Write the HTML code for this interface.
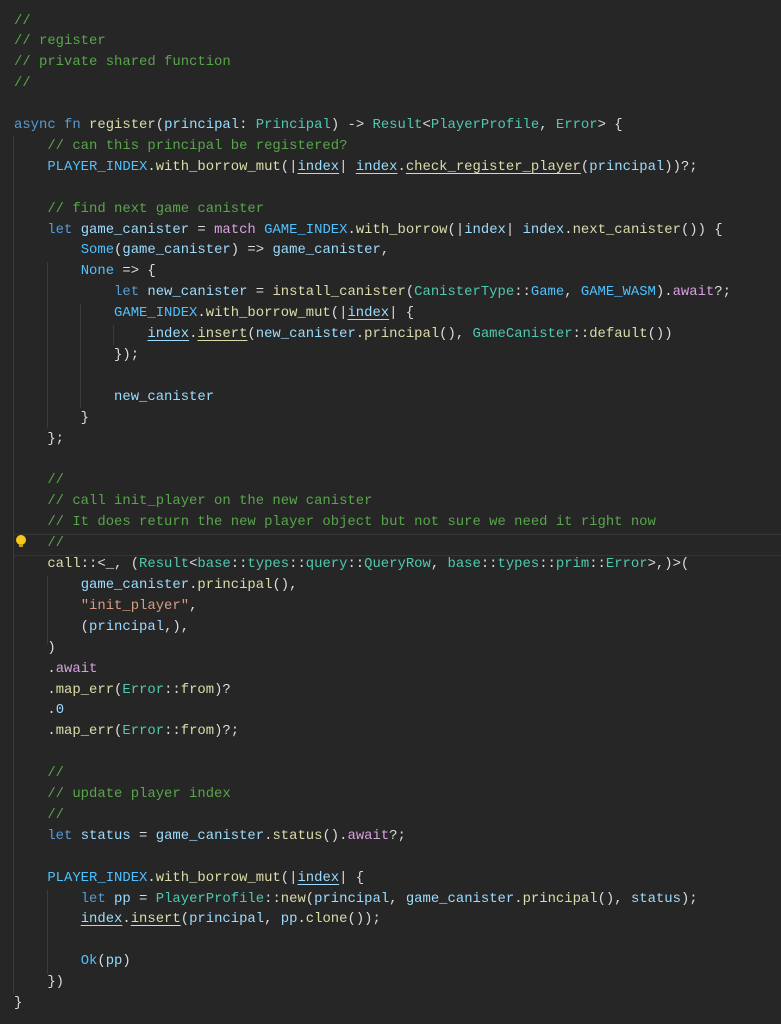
<!DOCTYPE html>
<html><head><meta charset="utf-8"><style>
html,body{margin:0;padding:0;background:#262626;width:781px;height:1024px;overflow:hidden}
pre{margin:0;position:absolute;left:14px;top:10.5px;font-family:"Liberation Mono",monospace;font-size:13.9px;line-height:20.9px;color:#dcdcdc}
.k{color:#569cd6}.c{color:#57a64a}.f{color:#dcdcaa}.v{color:#9cdcfe}.t{color:#4ec9b0}.m{color:#d8a0df}.s{color:#d69d85}.g{color:#4fc1ff}
.u{text-decoration:underline;text-underline-offset:3px}
.guide{position:absolute;width:1px;background:#3c3c3c}
.hl{position:absolute;left:14px;right:0;top:534px;height:20px;border-top:1px solid #353535;border-bottom:1px solid #353535}
.bulb{position:absolute;left:16px;top:535px;width:10px;height:10px;border-radius:50%;background:#f6c819}
.bulb:after{content:"";position:absolute;left:3px;top:9px;width:4px;height:3px;background:#c9a00f}
</style></head><body>
<div class="hl"></div>
<div class="guide" style="left:13px;top:136px;height:858px"></div>
<div class="guide" style="left:47px;top:262px;height:166px"></div>
<div class="guide" style="left:47px;top:576px;height:68px"></div>
<div class="guide" style="left:47px;top:890px;height:84px"></div>
<div class="guide" style="left:80px;top:304px;height:104px"></div>
<div class="guide" style="left:113px;top:325px;height:20px"></div>
<div class="bulb"></div>
<pre><span class="c">//
// register
// private shared function
//</span>

<span class="k">async</span> <span class="k">fn</span> <span class="f">register</span>(<span class="v">principal</span>: <span class="t">Principal</span>) -&gt; <span class="t">Result</span>&lt;<span class="t">PlayerProfile</span>, <span class="t">Error</span>&gt; {
    <span class="c">// can this principal be registered?</span>
    <span class="g">PLAYER_INDEX</span>.<span class="f">with_borrow_mut</span>(|<span class="v u">index</span>| <span class="v u">index</span>.<span class="f u">check_register_player</span>(<span class="v">principal</span>))?;

    <span class="c">// find next game canister</span>
    <span class="k">let</span> <span class="v">game_canister</span> = <span class="m">match</span> <span class="g">GAME_INDEX</span>.<span class="f">with_borrow</span>(|<span class="v">index</span>| <span class="v">index</span>.<span class="f">next_canister</span>()) {
        <span class="g">Some</span>(<span class="v">game_canister</span>) =&gt; <span class="v">game_canister</span>,
        <span class="g">None</span> =&gt; {
            <span class="k">let</span> <span class="v">new_canister</span> = <span class="f">install_canister</span>(<span class="t">CanisterType</span>::<span class="g">Game</span>, <span class="g">GAME_WASM</span>).<span class="m">await</span>?;
            <span class="g">GAME_INDEX</span>.<span class="f">with_borrow_mut</span>(|<span class="v u">index</span>| {
                <span class="v u">index</span>.<span class="f u">insert</span>(<span class="v">new_canister</span>.<span class="f">principal</span>(), <span class="t">GameCanister</span>::<span class="f">default</span>())
            });

            <span class="v">new_canister</span>
        }
    };

    <span class="c">//
    // call init_player on the new canister
    // It does return the new player object but not sure we need it right now
    //</span>
    <span class="f">call</span>::&lt;_, (<span class="t">Result</span>&lt;<span class="t">base</span>::<span class="t">types</span>::<span class="t">query</span>::<span class="t">QueryRow</span>, <span class="t">base</span>::<span class="t">types</span>::<span class="t">prim</span>::<span class="t">Error</span>&gt;,)&gt;(
        <span class="v">game_canister</span>.<span class="f">principal</span>(),
        <span class="s">"init_player"</span>,
        (<span class="v">principal</span>,),
    )
    .<span class="m">await</span>
    .<span class="f">map_err</span>(<span class="t">Error</span>::<span class="f">from</span>)?
    .<span class="v">0</span>
    .<span class="f">map_err</span>(<span class="t">Error</span>::<span class="f">from</span>)?;

    <span class="c">//
    // update player index
    //</span>
    <span class="k">let</span> <span class="v">status</span> = <span class="v">game_canister</span>.<span class="f">status</span>().<span class="m">await</span>?;

    <span class="g">PLAYER_INDEX</span>.<span class="f">with_borrow_mut</span>(|<span class="v u">index</span>| {
        <span class="k">let</span> <span class="v">pp</span> = <span class="t">PlayerProfile</span>::<span class="f">new</span>(<span class="v">principal</span>, <span class="v">game_canister</span>.<span class="f">principal</span>(), <span class="v">status</span>);
        <span class="v u">index</span>.<span class="f u">insert</span>(<span class="v">principal</span>, <span class="v">pp</span>.<span class="f">clone</span>());

        <span class="g">Ok</span>(<span class="v">pp</span>)
    })
}</pre>
</body></html>
